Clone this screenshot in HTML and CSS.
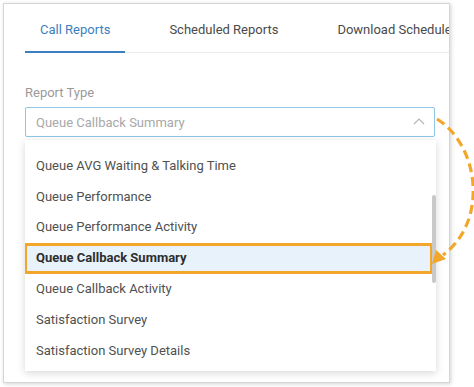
FILE: index.html
```html
<!DOCTYPE html>
<html>
<head>
    <title>Call Reports</title>
    <link rel="stylesheet" href="styles.css">
</head>
<body>
<div class="card">
    <nav class="tabs">
        <a href="#" class="tab active">Call Reports</a>
        <a href="#" class="tab">Scheduled Reports</a>
        <a href="#" class="tab">Download Scheduled Reports</a>
    </nav>
    <div class="field">
        <label class="field-label">Report Type</label>
        <div class="select">
            <span class="select-value">Queue Callback Summary</span>
            <svg class="chevron" width="12" height="8" viewBox="0 0 12 8">
                <polyline points="1,7 6,2 11,7" fill="none" stroke="#b5b5b5" stroke-width="1.2"/>
            </svg>
        </div>
        <div class="other-field"></div>
    </div>

    <div class="dropdown">
        <ul class="options">
            <li>Queue AVG Waiting &amp; Talking Time</li>
            <li>Queue Performance</li>
            <li>Queue Performance Activity</li>
            <li class="selected">Queue Callback Summary</li>
            <li>Queue Callback Activity</li>
            <li>Satisfaction Survey</li>
            <li>Satisfaction Survey Details</li>
        </ul>
        <div class="scrollbar"></div>
    </div>
</div>

<!-- dashed pointer from the select box to the picked option -->
<svg class="pointer" width="474" height="387" viewBox="0 0 474 387">
    <path d="M437 119 C 480 146, 488 222, 443 255" fill="none" stroke="#f2a62a" stroke-width="3.2" stroke-dasharray="9 5"/>
    <polygon points="432,264 436,250 446,259" fill="#f2a62a"/>
</svg>
</body>
</html>
```

FILE: styles.css
```css
body {
	margin: 0;
	background-color: #FFFFFF;
	font-family: Roboto, "Liberation Sans", sans-serif;
	font-size: 13px;
	position: relative;
	width: 474px;
	height: 387px;
	overflow: hidden;
}

.card {
	position: relative;
	margin: 3px 0 0 3px;
	width: 447px;
	height: 380px;
	border: 1px solid #d6d6d6;
	box-shadow: 1px 1px 4px 0px rgba(0, 0, 0, 0.18);
	background-color: #FFFFFF;
	padding-left: 21px;
	box-sizing: border-box;
	overflow: hidden;
}

.tabs {
	display: flex;
	height: 48px;
	border-bottom: 1px solid #ececec;
	white-space: nowrap;
}

.tab {
	color: #4a4a4a;
	text-decoration: none;
	padding: 18px 15px 0 15px;
	margin-right: 29px;
	line-height: 16px;
	box-sizing: border-box;
}

.tab.active {
	color: #3b7fc0;
	border-bottom: 2px solid #3b7fc0;
	margin-bottom: -1px;
}

.field {
	padding-top: 32px;
	padding-right: 14px;
}

.field-label {
	display: block;
	color: #9a9a9a;
	line-height: 16px;
	margin-bottom: 6px;
}

.select {
	display: flex;
	align-items: center;
	justify-content: space-between;
	height: 30px;
	border: 1px solid #8ec6e6;
	border-radius: 2px;
	padding: 0 9px 0 10px;
	box-sizing: border-box;
}

.select-value {
	color: #a8a8a8;
}

.chevron {
	margin-bottom: 2px;
}

.other-field {
	margin-top: 52px;
	height: 1px;
	background-color: #f0f0f0;
}

.dropdown {
	position: absolute;
	left: 21px;
	top: 136px;
	width: 411px;
	height: 231px;
	background-color: #FFFFFF;
	box-shadow: 0px 2px 8px 0px rgba(0, 0, 0, 0.16);
	overflow: hidden;
}

.options {
	list-style: none;
	margin: 0;
	padding: 10.8px 0 0 0;
}

.options li {
	height: 30.8px;
	line-height: 30.8px;
	padding-left: 11px;
	color: #505050;
	box-sizing: border-box;
}

.options li.selected {
	background-color: #e8f2fa;
	color: #2e2e2e;
	font-weight: bold;
	border: 3px solid #f2a62a;
	line-height: 24.8px;
	margin-left: -1px;
	padding-left: 9px;
	width: 409px;
}

.scrollbar {
	position: absolute;
	right: 0;
	top: 55px;
	width: 4px;
	height: 88px;
	border-radius: 2px;
	background-color: #c9c9c9;
}

.pointer {
	position: absolute;
	left: 0;
	top: 0;
	pointer-events: none;
}
```
